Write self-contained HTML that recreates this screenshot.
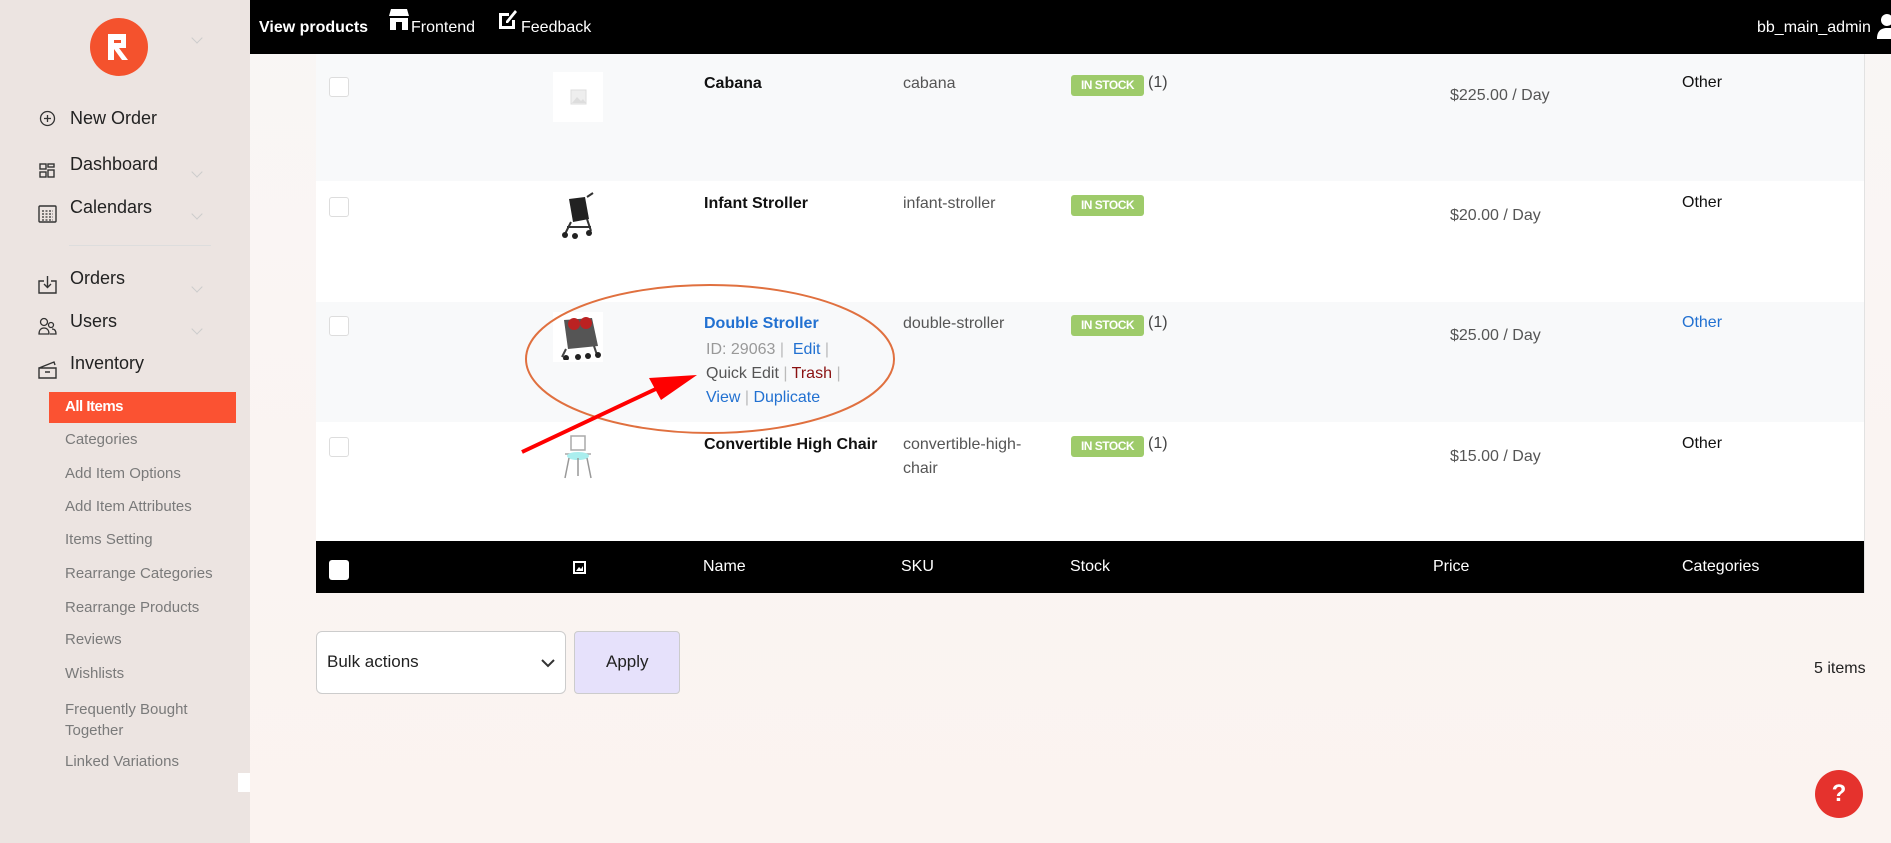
<!DOCTYPE html>
<html><head><meta charset="utf-8"><style>
*{margin:0;padding:0;box-sizing:border-box}
body{width:1891px;height:843px;overflow:hidden;font-family:"Liberation Sans",sans-serif;background:linear-gradient(#f9f6f5,#fbf3f0);position:relative}
.abs{position:absolute;white-space:nowrap}
#side{position:absolute;left:0;top:0;width:250px;height:843px;background:#ece4e1}
.mi{position:absolute;left:70px;font-size:18px;color:#222}
.si{position:absolute;left:65px;font-size:15px;color:#7a7a7a}
.chev{position:absolute;left:193px;width:8px;height:8px;border-right:1px solid #ccc;border-bottom:1px solid #ccc;transform:rotate(45deg)}
#hdr{position:absolute;left:250px;top:0;width:1641px;height:54px;background:#000;color:#fff}
.row{position:absolute;left:316px;width:1548px}
.cb{position:absolute;left:13px;width:20px;height:20px;border:1px solid #ddd;border-radius:3px;background:#fff}
.nm{position:absolute;left:388px;font-size:16px;font-weight:bold;color:#111}
.sku{position:absolute;left:587px;font-size:16px;color:#555;line-height:24px}
.badge{position:absolute;left:755px;background:#9ecb6a;color:#fff;font-size:12px;font-weight:bold;width:73px;height:21px;line-height:21px;text-align:center;border-radius:3px;letter-spacing:-0.5px}
.cnt{position:absolute;left:832px;font-size:16px;color:#444}
.pr{position:absolute;left:1134px;font-size:16px;color:#555}
.cat{position:absolute;left:1366px;font-size:16px;color:#111}
.ft{position:absolute;font-size:16px;color:#fff;top:17px}
</style></head><body>
<div id="side">
 <div class="abs" style="left:90px;top:18px;width:58px;height:58px;border-radius:50%;background:#f4522d"></div>
 <svg class="abs" style="left:104px;top:30px" width="30" height="34" viewBox="0 0 30 34"><path d="M4 4h18v14h-7l9 12h-6l-8-11v11H4z" fill="#fff"/><path d="M10 10h7v3h-7z" fill="#f4522d"/></svg>
 <div class="chev" style="top:34px"></div>
 <svg class="abs" style="left:39px;top:110px" width="17" height="17"><circle cx="8.5" cy="8.5" r="7" fill="none" stroke="#333" stroke-width="1.3"/><path d="M8.5 5v7M5 8.5h7" stroke="#333" stroke-width="1.3"/></svg>
 <div class="mi" style="top:108px">New Order</div>
 <svg class="abs" style="left:39px;top:163px" width="16" height="16"><rect x="1" y="1" width="6" height="5" fill="none" stroke="#333" stroke-width="1.4"/><rect x="9" y="1" width="6" height="3" fill="none" stroke="#333" stroke-width="1.4"/><rect x="1" y="9" width="6" height="5" fill="none" stroke="#333" stroke-width="1.4"/><rect x="9" y="7" width="6" height="7" fill="none" stroke="#333" stroke-width="1.4"/></svg>
 <div class="mi" style="top:154px">Dashboard</div><div class="chev" style="top:168px"></div>
 <svg class="abs" style="left:38px;top:204px" width="19" height="19"><rect x="1" y="2" width="17" height="16" rx="1" fill="none" stroke="#333" stroke-width="1.4"/><path d="M4 7h11M4 10h11M4 13h11M4 16h11" stroke="#333" stroke-width="1.3" stroke-dasharray="2 1.5"/></svg>
 <div class="mi" style="top:197px">Calendars</div><div class="chev" style="top:210px"></div>
 <div class="abs" style="left:69px;top:245px;width:142px;height:1px;background:#ddd"></div>
 <svg class="abs" style="left:38px;top:275px" width="19" height="19"><path d="M6 6H1v12h17V6h-5M9.5 1v11M6 9l3.5 3.5L13 9" fill="none" stroke="#333" stroke-width="1.4"/></svg>
 <div class="mi" style="top:268px">Orders</div><div class="chev" style="top:283px"></div>
 <svg class="abs" style="left:38px;top:317px" width="20" height="19"><circle cx="6" cy="5" r="3.5" fill="none" stroke="#333" stroke-width="1.3"/><circle cx="13" cy="8" r="2.5" fill="none" stroke="#333" stroke-width="1.3"/><path d="M1 17c0-4 2-6 5-6s5 2 5 6zM12 17h6c0-3-1-5-4-5" fill="none" stroke="#333" stroke-width="1.3"/></svg>
 <div class="mi" style="top:311px">Users</div><div class="chev" style="top:325px"></div>
 <svg class="abs" style="left:38px;top:360px" width="19" height="19"><path d="M1 8h17v10H1zM1 8l15-6 1 3M7 12h5" fill="none" stroke="#333" stroke-width="1.4"/></svg>
 <div class="mi" style="top:353px">Inventory</div>
 <div class="abs" style="left:49px;top:392px;width:187px;height:31px;background:#fb5232"></div>
 <div class="abs" style="left:65px;top:398px;font-size:15px;font-weight:bold;color:#fff;letter-spacing:-0.5px">All Items</div>
 <div class="si" style="top:431px">Categories</div>
 <div class="si" style="top:465px">Add Item Options</div>
 <div class="si" style="top:498px">Add Item Attributes</div>
 <div class="si" style="top:531px">Items Setting</div>
 <div class="si" style="top:565px">Rearrange Categories</div>
 <div class="si" style="top:599px">Rearrange Products</div>
 <div class="si" style="top:631px">Reviews</div>
 <div class="si" style="top:665px">Wishlists</div>
 <div class="si" style="top:699px;line-height:21px">Frequently Bought<br>Together</div>
 <div class="si" style="top:753px">Linked Variations</div>
 <div class="abs" style="left:238px;top:773px;width:12px;height:19px;background:#fff"></div>
</div>
<div id="hdr">
 <div class="abs" style="left:9px;top:19px;font-size:16px;font-weight:bold">View products</div>
 <svg class="abs" style="left:137px;top:7px" width="24" height="24"><path d="M2 9l2-7h16l2 7z" fill="#fff"/><rect x="3" y="11" width="18" height="12" fill="#fff"/><rect x="9" y="15" width="6" height="8" fill="#000"/></svg>
 <div class="abs" style="left:161px;top:19px;font-size:16px">Frontend</div>
 <svg class="abs" style="left:247px;top:7px" width="22" height="24"><path d="M2 6h10v3H5v10h10v-6h3v9H2z" fill="#fff"/><path d="M9 14l9-11 2 2-9 11H9z" fill="#fff"/></svg>
 <div class="abs" style="left:271px;top:19px;font-size:16px">Feedback</div>
 <div class="abs" style="left:1507px;top:19px;font-size:16px">bb_main_admin</div>
 <svg class="abs" style="left:1627px;top:13px" width="14" height="26"><circle cx="10" cy="7" r="6" fill="#fff"/><path d="M0 26c0-8 4-11 10-11s4 0 4 0v11z" fill="#fff"/></svg>
</div>
<div class="abs" style="left:316px;top:54px;width:1px;height:487px;background:#e8e8e8"></div>
<div class="abs" style="left:1864px;top:54px;width:1px;height:539px;background:#e2e2e2"></div>
<div class="row" style="top:54px;height:127px;background:#f8f9fa">
 <div class="cb" style="top:23px"></div>
 <div class="abs" style="left:237px;top:18px;width:50px;height:50px;background:#fff"></div>
 <svg class="abs" style="left:254px;top:35px" width="17" height="16"><rect x="1" y="1" width="15" height="14" fill="#eee" stroke="#ddd"/><path d="M2 14l5-6 4 4 2-2 3 4z" fill="#ddd"/></svg>
 <div class="nm" style="top:21px">Cabana</div>
 <div class="sku" style="top:18px">cabana</div>
 <div class="badge" style="top:21px">IN STOCK</div><div class="cnt" style="top:20px">(1)</div>
 <div class="pr" style="top:33px">$225.00 / Day</div>
 <div class="cat" style="top:20px">Other</div>
</div>
<div class="row" style="top:181px;height:121px;background:#fff">
 <div class="cb" style="top:16px"></div>
 <svg class="abs" style="left:243px;top:10px" width="40" height="50"><path d="M10 8l16-2 4 22-16 3z" fill="#222"/><path d="M28 6l6-4M12 31l-6 12M28 28l4 12M8 36h24" stroke="#333" stroke-width="2" fill="none"/><circle cx="6" cy="44" r="3" fill="#222"/><circle cx="16" cy="45" r="3" fill="#222"/><circle cx="30" cy="42" r="3" fill="#222"/></svg>
 <div class="nm" style="top:14px">Infant Stroller</div>
 <div class="sku" style="top:11px">infant-stroller</div>
 <div class="badge" style="top:14px">IN STOCK</div>
 <div class="pr" style="top:26px">$20.00 / Day</div>
 <div class="cat" style="top:13px">Other</div>
</div>
<div class="row" style="top:302px;height:120px;background:#f8f9fa">
 <div class="cb" style="top:14px"></div>
 <div class="abs" style="left:237px;top:10px;width:50px;height:50px;background:#fff"></div>
 <svg class="abs" style="left:240px;top:12px" width="46" height="46"><path d="M8 6l28-2 6 28-30 3z" fill="#555"/><circle cx="18" cy="10" r="6" fill="#b22"/><circle cx="30" cy="9" r="6" fill="#b22"/><path d="M10 35l-4 8M38 32l3 9" stroke="#444" stroke-width="2"/><circle cx="10" cy="44" r="3" fill="#222"/><circle cx="22" cy="43" r="3" fill="#222"/><circle cx="32" cy="42" r="3" fill="#222"/><circle cx="42" cy="41" r="3" fill="#222"/></svg>
 <div class="nm" style="top:13px;color:#2271d1">Double Stroller</div>
 <div class="abs" style="left:390px;top:39px;font-size:16px;color:#999">ID: 29063 <span style="color:#bbb">|</span>&nbsp; <span style="color:#2271d1">Edit</span> <span style="color:#bbb">|</span></div>
 <div class="abs" style="left:390px;top:63px;font-size:16px;color:#555">Quick Edit <span style="color:#bbb">|</span> <span style="color:#8a1111">Trash</span> <span style="color:#bbb">|</span></div>
 <div class="abs" style="left:390px;top:87px;font-size:16px;color:#2271d1">View <span style="color:#bbb">|</span> Duplicate</div>
 <div class="sku" style="top:10px">double-stroller</div>
 <div class="badge" style="top:13px">IN STOCK</div><div class="cnt" style="top:12px">(1)</div>
 <div class="pr" style="top:25px">$25.00 / Day</div>
 <div class="cat" style="top:12px;color:#2271d1">Other</div>
</div>
<div class="row" style="top:422px;height:119px;background:#fff">
 <div class="cb" style="top:15px"></div>
 <svg class="abs" style="left:245px;top:12px" width="34" height="46"><path d="M10 2h14v14H10zM4 20h26" stroke="#aaa" stroke-width="1.5" fill="none"/><ellipse cx="17" cy="22" rx="11" ry="4" fill="#aee"/><path d="M8 24L4 44M26 24l4 20M17 24v18" stroke="#999" stroke-width="1.5"/></svg>
 <div class="nm" style="top:14px">Convertible High Chair</div>
 <div class="sku" style="top:11px">convertible-high-<br>chair</div>
 <div class="badge" style="top:14px">IN STOCK</div><div class="cnt" style="top:13px">(1)</div>
 <div class="pr" style="top:26px">$15.00 / Day</div>
 <div class="cat" style="top:13px">Other</div>
</div>
<div class="row" style="top:541px;height:52px;background:#000">
 <div class="abs" style="left:13px;top:19px;width:20px;height:20px;background:#fff;border-radius:3px"></div>
 <svg class="abs" style="left:256px;top:19px" width="15" height="15"><rect x="1" y="1" width="13" height="13" fill="#fff"/><rect x="3" y="3" width="9" height="9" fill="#000"/><path d="M4 11l3-4 2 2 2-3v5z" fill="#fff"/></svg>
 <div class="ft" style="left:387px">Name</div>
 <div class="ft" style="left:585px">SKU</div>
 <div class="ft" style="left:754px">Stock</div>
 <div class="ft" style="left:1117px">Price</div>
 <div class="ft" style="left:1366px">Categories</div>
</div>
<div class="abs" style="left:316px;top:631px;width:250px;height:63px;background:#fff;border:1px solid #ccc;border-radius:6px"></div>
<div class="abs" style="left:327px;top:652px;font-size:17px;color:#222">Bulk actions</div>
<svg class="abs" style="left:541px;top:659px" width="14" height="9"><path d="M1 1l6 6 6-6" fill="none" stroke="#333" stroke-width="2"/></svg>
<div class="abs" style="left:574px;top:631px;width:106px;height:63px;background:#e6e1fb;border:1px solid #ccc;border-radius:4px"></div>
<div class="abs" style="left:606px;top:652px;font-size:17px;color:#222">Apply</div>
<div class="abs" style="left:1814px;top:660px;font-size:16px;color:#222">5 items</div>
<div class="abs" style="left:1815px;top:770px;width:48px;height:48px;border-radius:50%;background:#e5322d;color:#fff;font-size:24px;font-weight:bold;text-align:center;line-height:48px">?</div>
<svg class="abs" style="left:0;top:0" width="1891" height="843">
 <ellipse cx="710" cy="359" rx="184" ry="74" fill="none" stroke="#e0703f" stroke-width="2"/>
 <line x1="522" y1="452" x2="660" y2="387" stroke="#f00" stroke-width="4"/>
 <path d="M697 375l-48 3 12 22z" fill="#f00"/>
</svg>
</body></html>
